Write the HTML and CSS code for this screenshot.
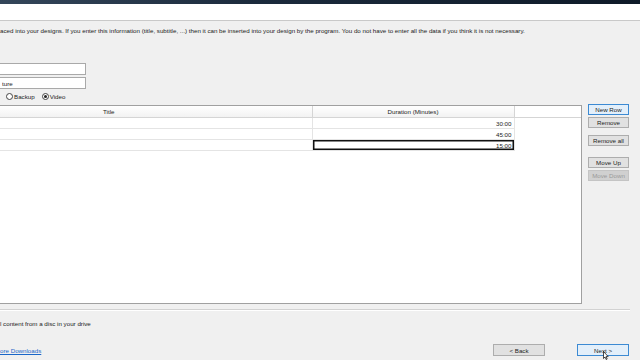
FILE: index.html
```html
<!DOCTYPE html>
<html lang="en">
<head>
    <meta charset="UTF-8">
    <title>Disc Wizard - Titles</title>
    <link rel="stylesheet" href="styles.css">
</head>
<body>
    <div class="titlebar"></div>
    <div class="header"></div>

    <div class="content">
        <p class="intro">aced into your designs. If you enter this information (title, subtitle, ...) then it can be inserted into your design by the program. You do not have to enter all the data if you think it is not necessary.</p>

        <div class="fields">
            <input type="text" class="field" value="">
            <input type="text" class="field" value="ture">
            <div class="radios">
                <label class="radio"><span class="dot"></span>Backup</label>
                <label class="radio"><span class="dot checked"></span>Video</label>
            </div>
        </div>

        <div class="list-area">
            <div class="grid">
                <table>
                    <thead>
                        <tr>
                            <th class="col-title">Title</th>
                            <th class="col-duration">Duration (Minutes)</th>
                            <th class="col-fill"></th>
                        </tr>
                    </thead>
                    <tbody>
                        <tr><td></td><td class="num">30:00</td><td class="col-fill"></td></tr>
                        <tr><td></td><td class="num">45:00</td><td class="col-fill"></td></tr>
                        <tr><td></td><td class="num selected">15:00</td><td class="col-fill"></td></tr>
                    </tbody>
                </table>
            </div>

            <div class="side-buttons">
                <button class="btn focus">New Row</button>
                <button class="btn">Remove</button>
                <button class="btn group">Remove all</button>
                <button class="btn group-lg">Move Up</button>
                <button class="btn disabled">Move Down</button>
            </div>
        </div>

        <div class="separator"></div>

        <p class="hint">l content from a disc in your drive</p>

        <div class="footer">
            <a href="#" class="link">ore Downloads</a>
            <div class="nav">
                <button class="btn nav-btn">&lt; Back</button>
                <button class="btn nav-btn focus">Next &gt;</button>
            </div>
        </div>
    </div>

    <svg class="cursor" width="6" height="9" viewBox="0 0 6 9">
        <path d="M0.5 0.5 L0.5 7.5 L2 6 L3.2 8.5 L4.2 8 L3 5.6 L5.2 5.6 Z" fill="#fff" stroke="#000" stroke-width="0.7"/>
    </svg>
</body>
</html>
```

FILE: styles.css
```css
body {
    margin: 0;
    width: 640px;
    height: 360px;
    overflow: hidden;
    background: #f0f0f0;
    font-family: "Liberation Sans", Arial, sans-serif;
    font-size: 6.2px;
    color: #222;
    position: relative;
}

.titlebar {
    height: 4px;
    background: linear-gradient(to right, #34465a, #1b2a3c 40%, #0e1a28);
}

.header {
    height: 16px;
    background: #ffffff;
    border-bottom: 1px solid #c9c9c9;
}

.content {
    padding-right: 10px;
}

.intro {
    margin: 0;
    padding-top: 6px;
    line-height: 8px;
    white-space: nowrap;
}

.fields {
    display: flex;
    flex-direction: column;
    gap: 2px;
    padding-top: 28px;
}

.field {
    box-sizing: border-box;
    width: 87px;
    height: 12px;
    margin: 0 0 0 -1px;
    padding: 0 2px;
    border: 1px solid #a9a9a9;
    background: #fff;
    font-family: inherit;
    font-size: 6.2px;
    color: #222;
}

.radios {
    display: flex;
    gap: 7px;
    padding-left: 6px;
    height: 10px;
    align-items: center;
}

.radio {
    display: flex;
    align-items: center;
    gap: 1px;
}

.dot {
    box-sizing: border-box;
    width: 7px;
    height: 7px;
    border: 1px solid #444;
    border-radius: 50%;
    background: #fff;
    position: relative;
}

.dot.checked::after {
    content: "";
    position: absolute;
    left: 1px;
    top: 1px;
    width: 3px;
    height: 3px;
    border-radius: 50%;
    background: #222;
}

.list-area {
    display: flex;
    align-items: flex-start;
    margin-top: 4px;
}

.grid {
    box-sizing: border-box;
    width: 583px;
    height: 199px;
    margin-left: -1px;
    border: 1px solid #a0a0a0;
    background: #fff;
}

table {
    border-collapse: collapse;
    table-layout: fixed;
    width: 100%;
}

th {
    height: 11px;
    padding: 0;
    font-weight: normal;
    background: linear-gradient(#ffffff, #f2f2f2);
    border-bottom: 1px solid #d5d5d5;
    border-right: 1px solid #d5d5d5;
}

.col-title {
    width: 312px;
    text-align: center;
    padding-right: 94px;
    box-sizing: border-box;
}

.col-duration {
    width: 201px;
    text-align: center;
}

th.col-fill {
    background: #fff;
    border-right: none;
}

td {
    height: 10px;
    padding: 0;
    border-bottom: 1px solid #e4e4e4;
    border-right: 1px solid #e4e4e4;
}

td.col-fill {
    border: none;
}

.num {
    text-align: right;
    padding-right: 2px;
}

.num.selected {
    box-shadow: inset 0 0 0 1.5px #111;
}

.side-buttons {
    display: flex;
    flex-direction: column;
    gap: 2px;
    margin-left: 6px;
    margin-top: -1px;
}

.btn {
    box-sizing: border-box;
    width: 41px;
    height: 11px;
    padding: 0;
    border: 1px solid #adadad;
    background: #e1e1e1;
    font-family: inherit;
    font-size: 6.2px;
    color: #222;
}

.btn.focus {
    border-color: #3c8ad3;
    background: #e3effa;
}

.btn.group {
    margin-top: 5px;
}

.btn.group-lg {
    margin-top: 9px;
}

.btn.disabled {
    background: #d0d0d0;
    border-color: #c4c4c4;
    color: #9a9a9a;
}

.separator {
    width: 630px;
    height: 1px;
    margin-top: 5px;
    border-top: 1px solid #d2d2d2;
    background: #fff;
}

.hint {
    margin: 0;
    padding-top: 9px;
    line-height: 8px;
}

.footer {
    display: flex;
    justify-content: space-between;
    align-items: center;
    margin-top: 16px;
}

.link {
    color: #1a66c8;
    text-decoration: underline;
}

.nav {
    display: flex;
    gap: 32px;
    margin-right: 1px;
}

.nav-btn {
    width: 52px;
    height: 12px;
}

.cursor {
    position: absolute;
    left: 603px;
    top: 351px;
}
```
